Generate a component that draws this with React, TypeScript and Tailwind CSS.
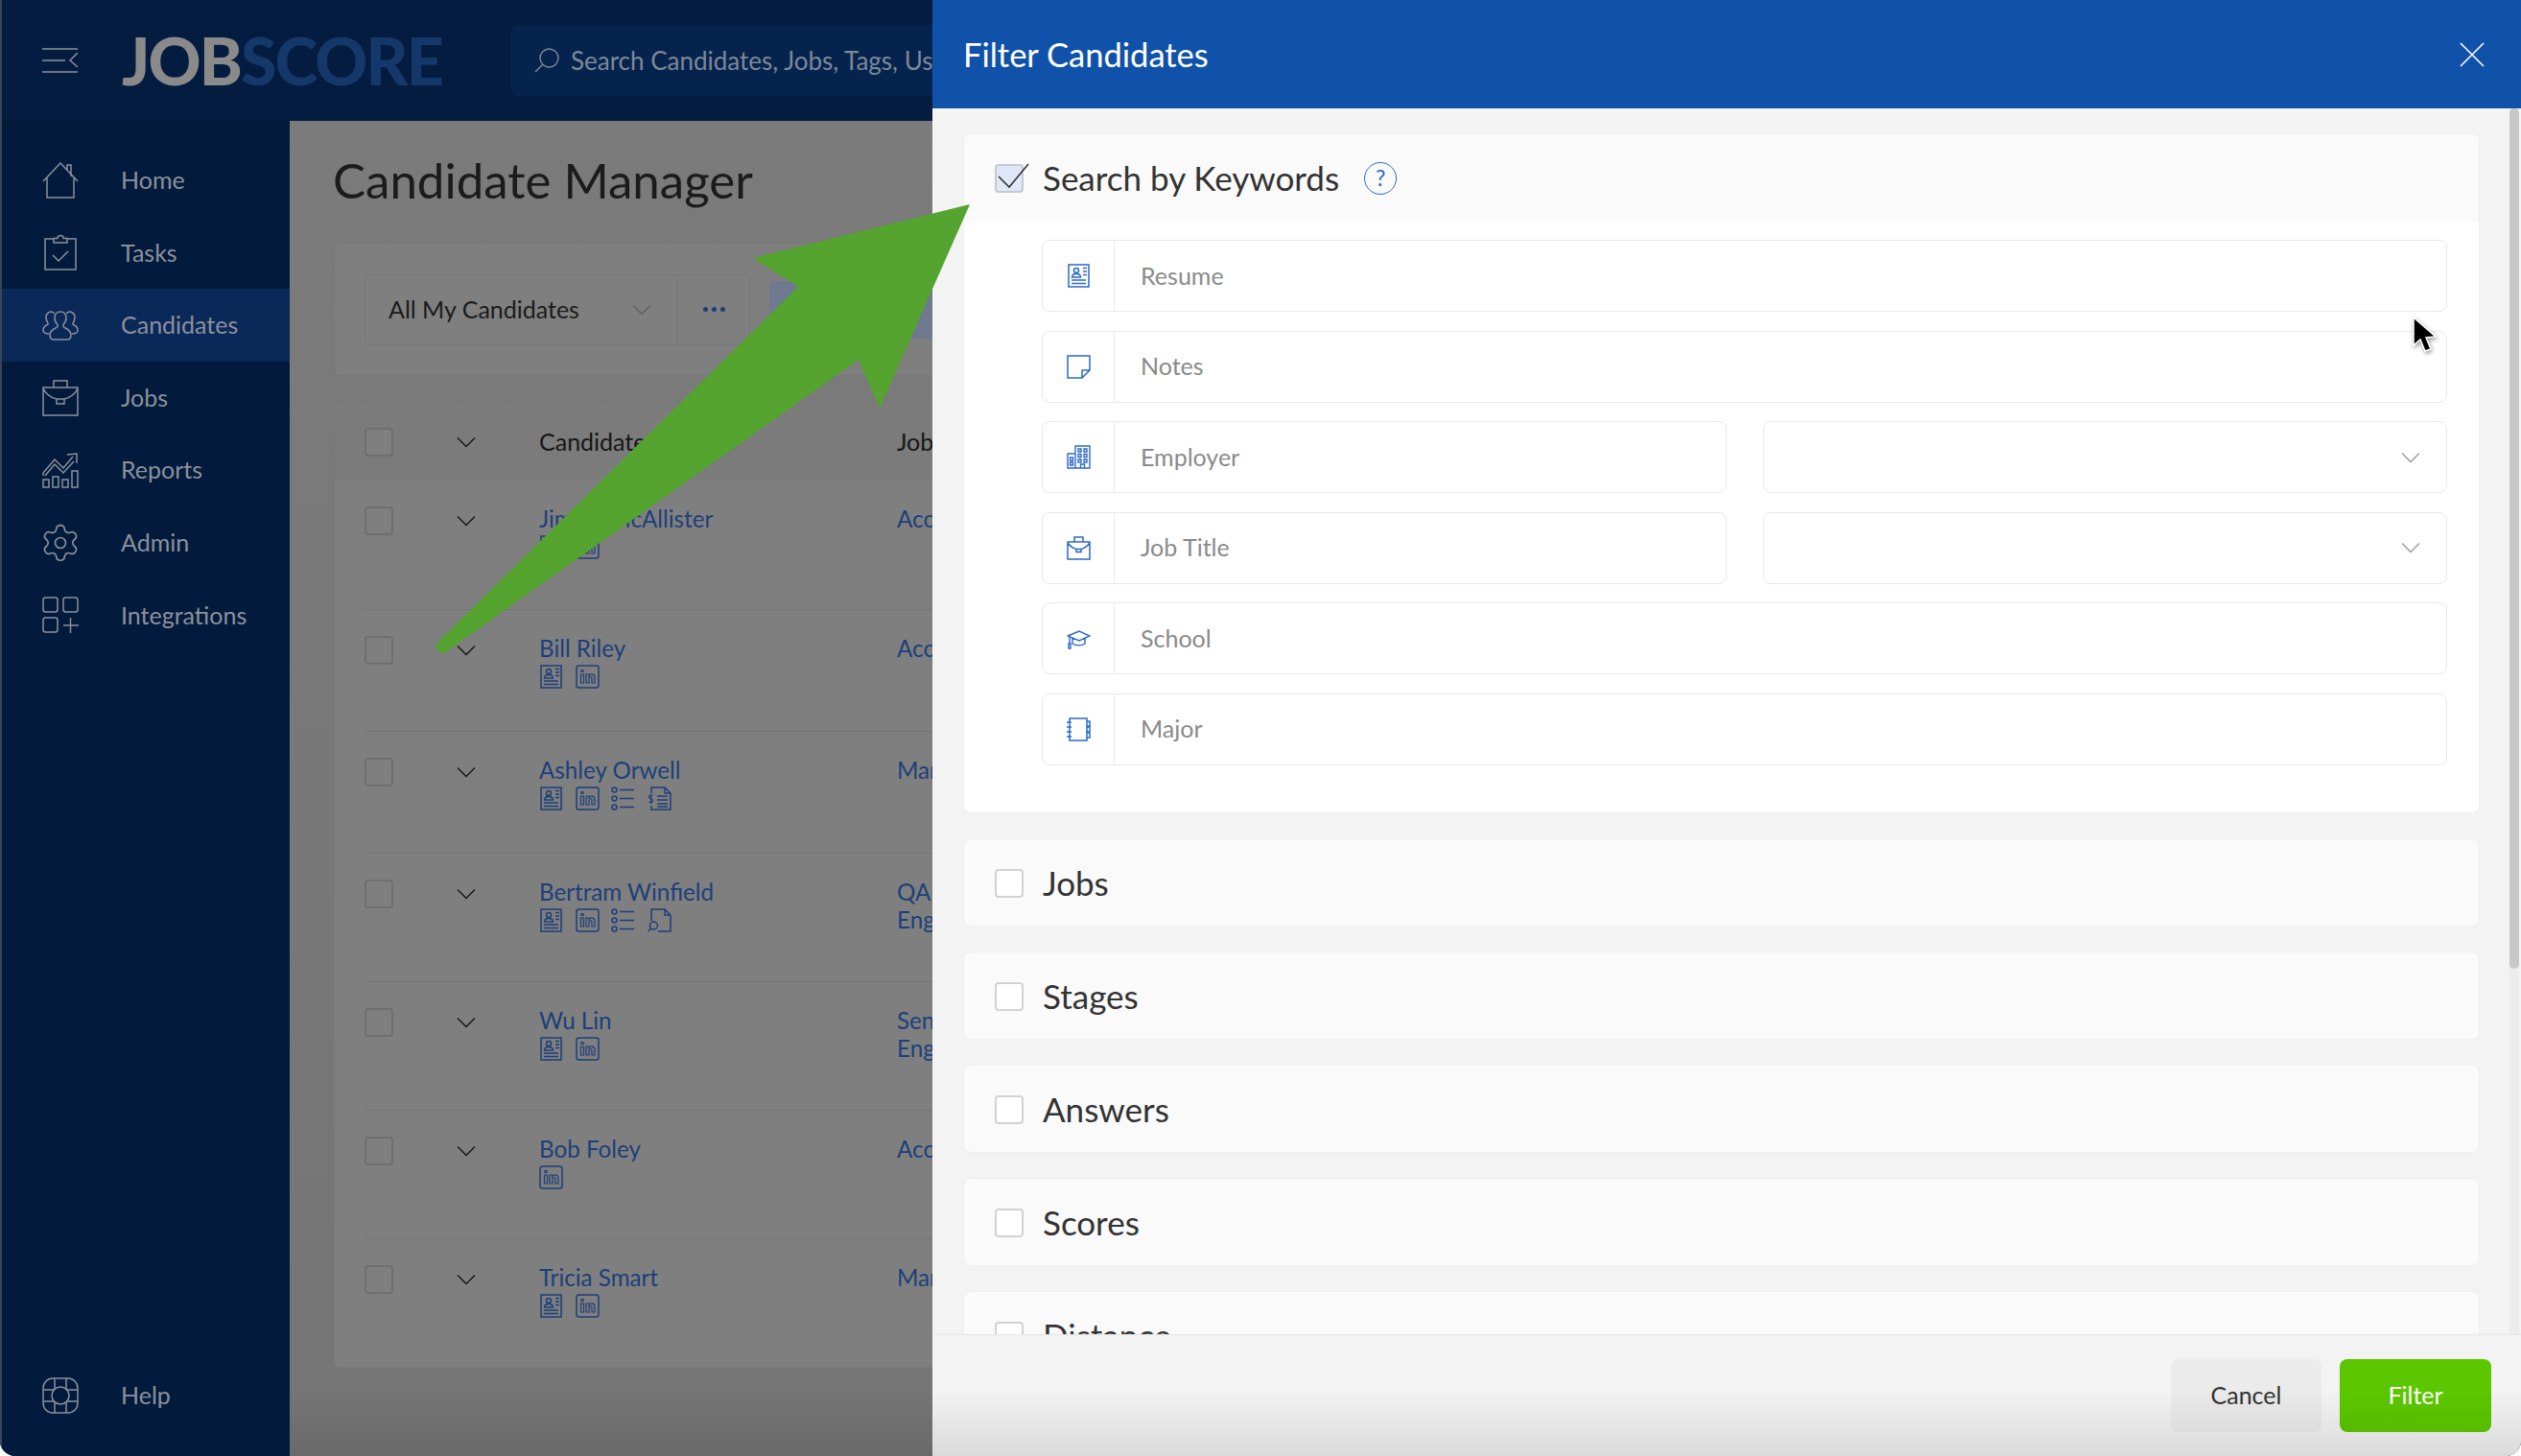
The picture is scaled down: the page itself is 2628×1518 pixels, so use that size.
import type { ReactNode } from "react";
import { Settings } from "lucide-react";

type IconName = "resume" | "linkedin" | "list" | "invoice" | "searchdoc";

type Candidate = {
  name: string;
  job: string[];
  icons: IconName[];
  rowClass: string;
};

const candidates: Candidate[] = [
  { name: "Jimmy McAllister", job: ["Account Manager"], icons: ["resume", "linkedin"], rowClass: "h-[135px]" },
  { name: "Bill Riley", job: ["Account Manager"], icons: ["resume", "linkedin"], rowClass: "h-[127px]" },
  { name: "Ashley Orwell", job: ["Marketing Manager"], icons: ["resume", "linkedin", "list", "invoice"], rowClass: "h-[127px]" },
  { name: "Bertram Winfield", job: ["QA", "Engineer"], icons: ["resume", "linkedin", "list", "searchdoc"], rowClass: "h-[134px]" },
  { name: "Wu Lin", job: ["Senior", "Engineer"], icons: ["resume", "linkedin"], rowClass: "h-[134px]" },
  { name: "Bob Foley", job: ["Account Manager"], icons: ["linkedin"], rowClass: "h-[134px]" },
  { name: "Tricia Smart", job: ["Marketing Manager"], icons: ["resume", "linkedin"], rowClass: "h-[133px]" },
];

function Svg({ size = 38, box = 38, children, className }: { size?: number; box?: number; children: ReactNode; className?: string }) {
  return (
    <svg width={size} height={size} viewBox={`0 0 ${box} ${box}`} fill="none" stroke="currentColor" strokeWidth={1.5} className={className}>
      {children}
    </svg>
  );
}

function Chevron({ w = 20, className }: { w?: number; className?: string }) {
  return (
    <svg width={w} height={w * 0.6} viewBox="0 0 20 12" fill="none" stroke="currentColor" strokeWidth={1.4} className={className}>
      <path d="M1 1.5 10 10.5 19 1.5" />
    </svg>
  );
}

function HomeIcon() {
  return (
    <Svg>
      <path d="M1 20 19 1l18 19M5 16v21h28V16M26 8V3h4v12" />
    </Svg>
  );
}

function TasksIcon() {
  return (
    <Svg>
      <path d="M12 5H3v32h32V5h-9M12 9V4.500h4a3 3 0 0 1 6 0h4V9zM11 22l6 6 10-10" />
    </Svg>
  );
}

function CandidatesIcon() {
  return (
    <Svg>
      <path d="M19 5c-4 0-6 3-6 6.500 0 3 1 5 3 7v2c0 1-8 3-8 8.500 0 3 1 5 4 5h14c3 0 4-2 4-5 0-5.500-8-7.500-8-8.500v-2c2-2 3-4 3-7C25 8 23 5 19 5z" />
      <path d="M13 7C9 3 4 6 4 11c0 3 1 4 2 6v1c-2 1-5 3-5 6 0 2 2 4 6 4M25 7c4-4 9-1 9 4 0 3-1 4-2 6v1c2 1 5 3 5 6 0 2-2 4-6 4" />
    </Svg>
  );
}

function BriefcaseIcon() {
  return (
    <Svg>
      <path d="M1 8h36v29H1zM12 8V1h14v7M1 9c3 7 10 10 14 11h8c4-1 11-4 14-11M15 20v5h8v-5" />
    </Svg>
  );
}

function ReportsIcon() {
  return (
    <Svg>
      <path d="M1 22 13 8l9 9 10-12M26 3l10-1v10M1 22v3M3 25 13 13l9 9 11-12" />
      <path d="M1 29h6v8H1zM11 26h6v11h-6zM21 29h6v8h-6zM31 20h6v17h-6z" />
    </Svg>
  );
}

function IntegrationsIcon() {
  return (
    <Svg>
      <rect x="1" y="1" width="15" height="15" rx="2.500" />
      <rect x="22" y="1" width="15" height="15" rx="2.500" />
      <rect x="1" y="22" width="15" height="15" rx="2.500" />
      <path d="M29.500 22v16M22 30h16" />
    </Svg>
  );
}

function HelpIcon() {
  return (
    <Svg>
      <rect x="1" y="1" width="36" height="36" rx="10" />
      <circle cx="19" cy="19" r="9" />
      <path d="M13 1v11M25 1v11M13 26v11M25 26v11M1 13h11M1 25h11M26 13h11M26 25h11" />
    </Svg>
  );
}

function ResumeIcon() {
  return (
    <Svg size={25} box={25}>
      <path d="M2 1h21v23H2z" />
      <circle cx="10" cy="7" r="2.500" />
      <path d="M5.500 14c0-3 2-3.500 4.500-3.500s4.500.5 4.500 3.500zM17 4.500h4M17 8h4M17 11.500h4M5 17h15M5 20.500h15" />
    </Svg>
  );
}

function LinkedinIcon() {
  return (
    <Svg size={25} box={25}>
      <rect x="1" y="1" width="23" height="23" rx="2.500" />
      <path d="M5.500 10v9h3v-9zM6 5.500h2v2H6zM11 19v-9h3v1.500c2-2.500 6-2 6 2V19h-3v-5c0-2-3-2-3 0v5z" strokeWidth={1.2} />
    </Svg>
  );
}

function ListIcon() {
  return (
    <Svg size={25} box={25}>
      <circle cx="3.500" cy="3.500" r="2.500" />
      <circle cx="3.500" cy="12.500" r="2.500" />
      <circle cx="3.500" cy="21.500" r="2.500" />
      <path d="M9 3.500h15M9 12.500h15M9 21.500h15" />
    </Svg>
  );
}

function InvoiceIcon() {
  return (
    <Svg size={25} box={25}>
      <path d="M4 7V1h14l6 6v17H4v-4M18 1v6h6M10 10h11M10 14h11M10 18h11M10 21h11" />
      <path d="M5.500 9.500C4 8.500 1.500 9 1.500 11s4 1.500 4 3.500-2.500 2.500-4 1.500M3.500 8v10" strokeWidth={1.2} />
    </Svg>
  );
}

function SearchDocIcon() {
  return (
    <Svg size={25} box={25}>
      <path d="M4 13V1h14l6 6v17H11M18 1v6h6" />
      <circle cx="6.500" cy="18" r="4" />
      <path d="M3.500 21 .5 24" />
    </Svg>
  );
}

const tableIcons: Record<IconName, () => ReactNode> = {
  resume: ResumeIcon,
  linkedin: LinkedinIcon,
  list: ListIcon,
  invoice: InvoiceIcon,
  searchdoc: SearchDocIcon,
};

function NoteIcon() {
  return (
    <Svg size={25} box={25}>
      <path d="M1 1h23v15l-8 8H1zM16 24v-8h8" />
    </Svg>
  );
}

function BuildingIcon() {
  return (
    <Svg size={25} box={25}>
      <path d="M9 24V1h15v23zM9 9H1v15h8M3.500 13h3v3h-3zM3.500 18h3v3h-3zM12 4h3v3h-3zM18 4h3v3h-3zM12 9.500h3v3h-3zM18 9.500h3v3h-3zM12 15h3v3h-3zM18 15h3v3h-3zM14.500 24v-4h4v4" strokeWidth={1.4} />
    </Svg>
  );
}

function SmallBriefcaseIcon() {
  return (
    <Svg size={25} box={25}>
      <path d="M1 6h23v18H1zM8 6V1h9v5M1 7c3 4 7 6 9 6.500h5C17 13 21 11 24 7M10 13.500v3h5v-3" />
    </Svg>
  );
}

function SchoolIcon() {
  return (
    <Svg size={25} box={25}>
      <path d="M1 10 13 5l11 5-11 5zM6 12.500V18c3 2.500 10 2.500 13 0v-5.500M3 11v7M2 18h2v5H2z" strokeWidth={1.4} />
    </Svg>
  );
}

function NotebookIcon() {
  return (
    <Svg size={25} box={25}>
      <path d="M3 1h18v23H3zM21 4h3v5h-3M21 10h3v5h-3M21 16h3v5h-3M0 5h5M0 10h5M0 15h5M0 20h5" />
    </Svg>
  );
}

function Sidebar() {
  const items: [string, ReactNode][] = [
    ["Home", <HomeIcon />],
    ["Tasks", <TasksIcon />],
    ["Candidates", <CandidatesIcon />],
    ["Jobs", <BriefcaseIcon />],
    ["Reports", <ReportsIcon />],
    ["Admin", <Settings size={44} strokeWidth={0.9} className="-m-[3px]" />],
    ["Integrations", <IntegrationsIcon />],
  ];
  return (
    <aside className="flex w-[302px] shrink-0 flex-col bg-[#021a3b] pt-[24px] pb-[25px] text-[#8b919c]">
      {items.map(([label, icon]) => (
        <div key={label} className={`flex h-[75.600px] items-center pl-[44px] ${label === "Candidates" ? "bg-[#0a2858]" : ""}`}>
          <span className="flex w-[82px] shrink-0">{icon}</span>
          <span className="text-[25px]">{label}</span>
        </div>
      ))}
      <div className="mt-auto flex h-[76px] items-center pl-[44px]">
        <span className="flex w-[82px] shrink-0">
          <HelpIcon />
        </span>
        <span className="text-[25px]">Help</span>
      </div>
    </aside>
  );
}

function Topbar() {
  return (
    <header className="flex h-[126px] shrink-0 items-center bg-[#041c3f] pl-[44px]">
      <svg width="38" height="26" viewBox="0 0 38 26" fill="none" stroke="#8b919c" strokeWidth={1.5} className="shrink-0">
        <path d="M0 1h37M0 13h24M0 25h37M37 5l-8 8 8 7" />
      </svg>
      <div className="ml-[45px] w-[405px] text-[68px] leading-none font-black tracking-[-1.900px]">
        <span className="text-[#8a8a8a]">JOB</span>
        <span className="text-[#15386a]">SCORE</span>
      </div>
      <div className="flex h-[74px] flex-1 items-center gap-[12px] rounded-[8px] bg-[#05234d] pl-[25px] text-[26px] text-[#7d8899]">
        <svg width="26" height="26" viewBox="0 0 26 26" fill="none" stroke="currentColor" strokeWidth={1.4}>
          <circle cx="15.500" cy="10.500" r="9.500" />
          <path d="M9 17 1 25" />
        </svg>
        <span>Search Candidates, Jobs, Tags, Users</span>
      </div>
    </header>
  );
}

function DarkCheckbox() {
  return <span className="block h-[30px] w-[30px] rounded-[4px] border-2 border-[#6f6f6f] bg-[#7f7f7f]" />;
}

function CandidateTable() {
  return (
    <div className="mr-[40px] mt-[27px] rounded-[6px] border border-[#797979] bg-[#7f7f7f]">
      <div className="grid h-[81px] grid-cols-[96px_86px_373px_1fr] items-center bg-[#7b7b7b] px-[31px] text-[25px] text-[#161616]">
        <DarkCheckbox />
        <Chevron className="text-[#161616]" />
        <span>Candidate</span>
        <span>Job</span>
      </div>
      <div className="px-[31px]">
        {candidates.map((c, i) => (
          <div
            key={c.name}
            className={`grid grid-cols-[96px_86px_373px_1fr] items-start border-[#747474] pt-[25px] ${c.rowClass} ${i < candidates.length - 1 ? "border-b" : ""}`}
          >
            <div className="pt-[2px]">
              <DarkCheckbox />
            </div>
            <Chevron className="mt-[11px] text-[#161616]" />
            <div>
              <div className="text-[24.200px] leading-[30px] text-[#1c3f7a]">{c.name}</div>
              <div className="mt-[2px] flex gap-[12.500px] text-[#1c3f7a]">
                {c.icons.map((name, k) => {
                  const Icon = tableIcons[name];
                  return <Icon key={k} />;
                })}
              </div>
            </div>
            <div className="text-[24.200px] leading-[29px] whitespace-nowrap text-[#1c3f7a]">
              {c.job.map((line) => (
                <div key={line}>{line}</div>
              ))}
            </div>
          </div>
        ))}
      </div>
    </div>
  );
}

function MainArea() {
  return (
    <main className="min-w-0 flex-1 overflow-hidden bg-linear-to-b from-[#7b7b7b] to-[#757575] pl-[46px]">
      <h1 className="mb-[2px] -ml-[1px] flex h-[125px] items-center text-[51px] text-[#1b1b1b]">Candidate Manager</h1>
      <div className="mr-[40px] flex h-[139px] items-center rounded-[6px] border border-[#797979] bg-[#7f7f7f] pl-[31px]">
        <div className="flex h-[74px] w-[402px] rounded-[6px] border border-[#777777]">
          <div className="flex w-[326px] items-center justify-between border-r border-[#777777] pr-[27px] pl-[24px] text-[25px] text-[#1b1b1b]">
            All My Candidates
            <Chevron className="text-[#5f5f5f]" />
          </div>
          <div className="flex flex-1 items-center justify-center gap-[4px]">
            <span className="h-[5px] w-[5px] rounded-full bg-[#1c3f7a]" />
            <span className="h-[5px] w-[5px] rounded-full bg-[#1c3f7a]" />
            <span className="h-[5px] w-[5px] rounded-full bg-[#1c3f7a]" />
          </div>
        </div>
        <div className="ml-[20px] h-[60px] w-[300px] rounded-[6px] bg-[#707a8e]" />
      </div>
      <CandidateTable />
    </main>
  );
}

function TextField({ placeholder, icon, className = "" }: { placeholder: string; icon: ReactNode; className?: string }) {
  return (
    <div className={`flex h-[75px] rounded-[8px] border border-[#e8e8e8] bg-white ${className}`}>
      <div className="flex w-[75px] shrink-0 items-center justify-center border-r border-[#e8e8e8] text-[#2d69c6]">{icon}</div>
      <div className="flex flex-1 items-center pl-[27px] text-[25px] text-[#8a8a8a]">{placeholder}</div>
    </div>
  );
}

function SelectField() {
  return (
    <div className="flex h-[75px] flex-1 items-center justify-end rounded-[8px] border border-[#e8e8e8] bg-white pr-[27px]">
      <Chevron className="text-[#9a9a9a]" />
    </div>
  );
}

function SectionCard({ label }: { label: string }) {
  return (
    <section className="flex h-[92px] shrink-0 items-center rounded-[8px] border border-[#efefef] bg-[#fafafa] pl-[32px]">
      <span className="mt-[2px] block h-[30px] w-[30px] rounded-[4px] border-2 border-[#d2d2d2] bg-white" />
      <span className="ml-[20px] text-[35px] text-[#333333]">{label}</span>
    </section>
  );
}

function FilterPanel() {
  return (
    <div className="absolute top-0 right-0 bottom-0 left-[972px] flex flex-col overflow-hidden rounded-br-[16px] bg-[#f3f3f3]">
      <div className="flex h-[113px] shrink-0 items-center justify-between bg-[#1052aa] pr-[38px] pl-[32px] text-white">
        <h2 className="text-[34.500px]">Filter Candidates</h2>
        <svg width="26" height="26" viewBox="0 0 26 26" fill="none" stroke="currentColor" strokeWidth={1.6}>
          <path d="M1 1l24 24M25 1 1 25" />
        </svg>
      </div>
      <div className="flex min-h-0 flex-1">
        <div className="flex min-w-0 flex-1 flex-col gap-[26px] overflow-hidden pt-[26px] pr-[31px] pl-[32px]">
          <section className="shrink-0 overflow-hidden rounded-[8px] border border-[#efefef] bg-white">
            <div className="flex h-[91px] items-center bg-[#fafafa] pl-[32px]">
              <span className="relative block h-[30px] w-[30px] rounded-[4px] border-2 border-[#c4cad4] bg-[#e0e8f7]">
                <svg width="34" height="28" viewBox="0 0 34 28" fill="none" stroke="#333333" strokeWidth={1.6} className="absolute -top-[3px] left-[1px]">
                  <path d="M1 14l11 11L32 1" />
                </svg>
              </span>
              <span className="ml-[20px] text-[35px] text-[#333333]">Search by Keywords</span>
              <span className="ml-[26px] flex h-[34px] w-[34px] items-center justify-center rounded-full border-[1.5px] border-[#2d69c6] text-[23px] text-[#2d69c6]">?</span>
            </div>
            <div className="flex flex-col gap-[19.500px] pt-[19px] pr-[33px] pb-[49.500px] pl-[81px]">
              <TextField placeholder="Resume" icon={<ResumeIcon />} />
              <TextField placeholder="Notes" icon={<NoteIcon />} />
              <div className="flex gap-[38px]">
                <TextField placeholder="Employer" icon={<BuildingIcon />} className="w-[714px] shrink-0" />
                <SelectField />
              </div>
              <div className="flex gap-[38px]">
                <TextField placeholder="Job Title" icon={<SmallBriefcaseIcon />} className="w-[714px] shrink-0" />
                <SelectField />
              </div>
              <TextField placeholder="School" icon={<SchoolIcon />} />
              <TextField placeholder="Major" icon={<NotebookIcon />} />
            </div>
          </section>
          <SectionCard label="Jobs" />
          <SectionCard label="Stages" />
          <SectionCard label="Answers" />
          <SectionCard label="Scores" />
          <SectionCard label="Distance" />
        </div>
        <div className="mr-[2px] w-[10px] shrink-0 bg-[#ececec]">
          <div className="h-[897px] rounded-[5px] bg-[#c8c8c8]" />
        </div>
      </div>
      <div className="flex h-[127px] shrink-0 justify-end gap-[19px] border-t border-[#e6e6e6] bg-[#f3f3f3] pt-[25px] pr-[31px] text-[25px]">
        <button className="h-[76px] w-[157px] rounded-[8px] bg-[#ebebeb] text-[#333333]">Cancel</button>
        <button className="h-[76px] w-[158px] rounded-[8px] bg-[#5cc700] text-white">Filter</button>
      </div>
    </div>
  );
}

export default function App() {
  return (
    <div className="relative h-[1518px] w-[2628px] overflow-hidden rounded-b-[16px] bg-[#021a3b] font-['Lato','Liberation_Sans',sans-serif]">
      <div className="flex h-full flex-col">
        <Topbar />
        <div className="flex min-h-0 flex-1">
          <Sidebar />
          <MainArea />
        </div>
      </div>
      <FilterPanel />
      {/* window edge and bottom shade of the screenshot */}
      <div className="absolute top-0 bottom-0 left-0 w-[2px] bg-[#3a4658]" />
      <div className="pointer-events-none absolute right-0 bottom-0 left-[302px] h-[70px] bg-linear-to-b from-transparent to-black/10" />
      {/* green arrow, coordinates are the picture's */}
      <svg width="2628" height="1518" className="pointer-events-none absolute top-0 left-0">
        <path d="M1011 213 785 269 832 299 458 668Q452 676 458 680 464 682 470 676L895 375 917 426Z" fill="#54a42f" />
      </svg>
      <svg width="30" height="42" viewBox="0 0 30 42" className="pointer-events-none absolute top-[329px] left-[2514px] drop-shadow-[1px_2px_2px_rgba(0,0,0,0.4)]">
        <path d="M2 2v29l7-6 5 12 6-2-5-12 10-1z" fill="#000" stroke="#fff" strokeWidth={1.5} />
      </svg>
    </div>
  );
}
